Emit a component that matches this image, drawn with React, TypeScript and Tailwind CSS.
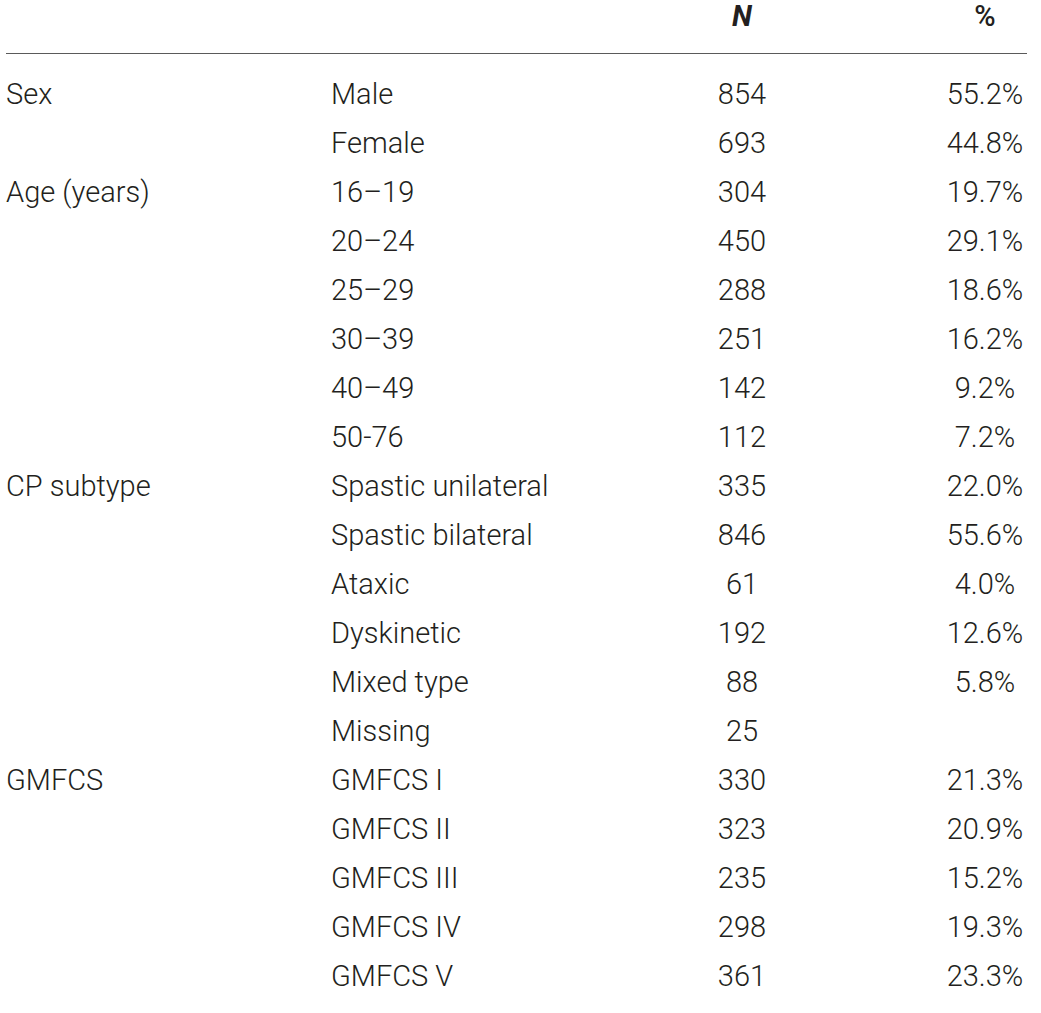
import React from "react";

const rows: [string, string, string, string][] = [
  ["Sex", "Male", "854", "55.2%"],
  ["", "Female", "693", "44.8%"],
  ["Age (years)", "16–19", "304", "19.7%"],
  ["", "20–24", "450", "29.1%"],
  ["", "25–29", "288", "18.6%"],
  ["", "30–39", "251", "16.2%"],
  ["", "40–49", "142", "9.2%"],
  ["", "50-76", "112", "7.2%"],
  ["CP subtype", "Spastic unilateral", "335", "22.0%"],
  ["", "Spastic bilateral", "846", "55.6%"],
  ["", "Ataxic", "61", "4.0%"],
  ["", "Dyskinetic", "192", "12.6%"],
  ["", "Mixed type", "88", "5.8%"],
  ["", "Missing", "25", ""],
  ["GMFCS", "GMFCS I", "330", "21.3%"],
  ["", "GMFCS II", "323", "20.9%"],
  ["", "GMFCS III", "235", "15.2%"],
  ["", "GMFCS IV", "298", "19.3%"],
  ["", "GMFCS V", "361", "23.3%"],
];

export default function App() {
  return (
    <div className="w-[1041px] h-[1013px] bg-white text-[#231f20] font-['Roboto',sans-serif] text-[29px] font-light">
      <div className="ml-[6px] w-[1021px]">
        <div className="grid grid-cols-[325px_341px_140px_131px_84px] leading-[32px] pb-[21px] border-b border-[#5a5a5a]">
          <div />
          <div />
          <div className="text-center font-bold italic">N</div>
          <div />
          <div className="text-center font-medium">%</div>
        </div>
        <div className="pt-[16px]">
          {rows.map((r, i) => (
            <div key={i} className="grid grid-cols-[325px_341px_140px_131px_84px] leading-[49px]">
              <div>{r[0]}</div>
              <div>{r[1]}</div>
              <div className="text-center">{r[2]}</div>
              <div />
              <div className="text-center">{r[3]}</div>
            </div>
          ))}
        </div>
      </div>
    </div>
  );
}
